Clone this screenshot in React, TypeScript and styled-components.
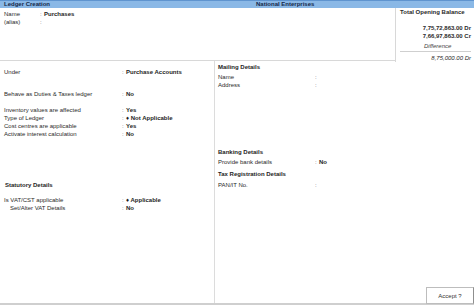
import React from 'react';
import styled, { createGlobalStyle } from 'styled-components';

const GlobalStyle = createGlobalStyle`
  html, body {
    margin: 0;
    padding: 0;
    background: #ffffff;
  }
  body {
    font-family: "Liberation Sans", Arial, sans-serif;
    font-size: 6px;
    color: #2a2a2a;
  }
`;

const Screen = styled.div`
  width: 474px;
  height: 305px;
  display: flex;
  flex-direction: column;
  overflow: hidden;
  background: #ffffff;
`;

const TitleBar = styled.div`
  height: 7px;
  flex: none;
  display: grid;
  grid-template-columns: 1fr 1fr;
  align-items: center;
  background: #8ab8e6;
  border-top: 1px solid #5f94cf;
  color: #14284a;
  font-weight: 700;
  font-size: 6px;
  line-height: 7px;
`;

const TitleLeft = styled.span`
  padding-left: 4px;
`;

const TitleRight = styled.span`
  padding-left: 19px;
`;

const Header = styled.div`
  height: 52px;
  flex: none;
  display: flex;
  border-bottom: 1px solid #d8d8d8;
`;

const NameBlock = styled.div`
  flex: 1;
  padding-top: 2px;
`;

const Row = styled.div<{ $label: number; $indent?: number }>`
  display: grid;
  grid-template-columns: ${(p) => p.$label}px 4px 1fr;
  height: 8px;
  line-height: 8px;
  padding-left: ${(p) => p.$indent ?? 4}px;
  white-space: nowrap;
`;

const Colon = styled.span`
  color: #555;
`;

const Value = styled.span`
  font-weight: 700;
  color: #1e1e1e;
`;

const BalanceBox = styled.div`
  box-sizing: border-box;
  width: 79px;
  flex: none;
  border-left: 1px solid #d8d8d8;
  padding: 0 3px 0 4px;
  display: flex;
  flex-direction: column;
  margin-bottom: -2px;
  background: #fff;
`;

const BalanceTitle = styled.div`
  font-weight: 700;
  line-height: 8px;
  white-space: nowrap;
`;

const Amount = styled.div<{ $italic?: boolean; $gap?: number }>`
  text-align: right;
  line-height: 8px;
  font-weight: ${(p) => (p.$italic ? 400 : 700)};
  font-style: ${(p) => (p.$italic ? 'italic' : 'normal')};
  margin-top: ${(p) => p.$gap ?? 0}px;
  white-space: nowrap;
`;

const DiffLabel = styled.div`
  font-style: italic;
  color: #444;
  line-height: 8px;
  margin-top: 2px;
  padding-left: 24px;
  padding-bottom: 1px;
  border-bottom: 1px solid #cfcfcf;
`;

const Body = styled.div`
  flex: 1;
  display: flex;
  min-height: 0;
`;

const LeftColumn = styled.div`
  width: 214px;
  flex: none;
  border-right: 1px solid #dcdcdc;
  padding-top: 7px;
`;

const RightColumn = styled.div`
  flex: 1;
  display: flex;
  flex-direction: column;
  padding-top: 2px;
`;

const Group = styled.div<{ $gap: number }>`
  margin-top: ${(p) => p.$gap}px;
`;

const SectionTitle = styled.div<{ $indent?: number }>`
  font-weight: 700;
  line-height: 8px;
  height: 8px;
  padding-left: ${(p) => p.$indent ?? 3}px;
  color: #1e1e1e;
`;

const Spacer = styled.div`
  flex: 1;
`;

const AcceptButton = styled.button`
  align-self: flex-end;
  width: 48px;
  height: 17px;
  margin: 0 0 -1px 0;
  border: 1px solid #bdbdbd;
  border-right-color: #8f8f8f;
  background: #ffffff;
  font-family: "Liberation Sans", Arial, sans-serif;
  font-size: 6px;
  color: #333;
  padding: 0;
  position: relative;
  z-index: 1;
`;

const BottomBar = styled.div`
  height: 2px;
  flex: none;
  background: #cfcfcf;
`;

type Field = { label: string; value?: string; indent?: number };

const FieldRow: React.FC<Field & { labelWidth: number }> = ({ label, value, indent, labelWidth }) => (
  <Row $label={labelWidth - (indent ?? 4) + 4} $indent={indent}>
    <span>{label}</span>
    <Colon>:</Colon>
    <Value>{value ?? ''}</Value>
  </Row>
);

export default function App() {
  return (
    <>
      <GlobalStyle />
      <Screen>
        <TitleBar>
          <TitleLeft>Ledger Creation</TitleLeft>
          <TitleRight>National Enterprises</TitleRight>
        </TitleBar>

        <Header>
          <NameBlock>
            <FieldRow labelWidth={36} label="Name" value="Purchases" />
            <FieldRow labelWidth={36} label="(alias)" />
          </NameBlock>
          <BalanceBox>
            <BalanceTitle>Total Opening Balance</BalanceTitle>
            <Amount $gap={8}>7,75,72,863.00 Dr</Amount>
            <Amount>7,66,97,863.00 Cr</Amount>
            <DiffLabel>Difference</DiffLabel>
            <Amount $italic $gap={2}>8,75,000.00 Dr</Amount>
          </BalanceBox>
        </Header>

        <Body>
          <LeftColumn>
            <FieldRow labelWidth={118} label="Under" value="Purchase Accounts" />
            <Group $gap={14}>
              <FieldRow labelWidth={118} label="Behave as Duties & Taxes ledger" value="No" />
            </Group>
            <Group $gap={8}>
              <FieldRow labelWidth={118} label="Inventory values are affected" value="Yes" />
              <FieldRow labelWidth={118} label="Type of Ledger" value="♦ Not Applicable" />
              <FieldRow labelWidth={118} label="Cost centres are applicable" value="Yes" />
              <FieldRow labelWidth={118} label="Activate interest calculation" value="No" />
            </Group>
            <Group $gap={43}>
              <SectionTitle $indent={5}>Statutory Details</SectionTitle>
            </Group>
            <Group $gap={7}>
              <FieldRow labelWidth={118} label="Is VAT/CST applicable" value="♦ Applicable" />
              <FieldRow labelWidth={118} indent={10} label="Set/Alter VAT Details" value="No" />
            </Group>
          </LeftColumn>

          <RightColumn>
            <SectionTitle>Mailing Details</SectionTitle>
            <Group $gap={2}>
              <FieldRow labelWidth={96} indent={3} label="Name" />
              <FieldRow labelWidth={96} indent={3} label="Address" />
            </Group>
            <Group $gap={59}>
              <SectionTitle>Banking Details</SectionTitle>
            </Group>
            <Group $gap={2}>
              <FieldRow labelWidth={96} indent={3} label="Provide bank details" value="No" />
            </Group>
            <Group $gap={4}>
              <SectionTitle>Tax Registration Details</SectionTitle>
            </Group>
            <Group $gap={3}>
              <FieldRow labelWidth={96} indent={3} label="PAN/IT No." />
            </Group>
            <Spacer />
            <AcceptButton>Accept ?</AcceptButton>
          </RightColumn>
        </Body>
        <BottomBar />
      </Screen>
    </>
  );
}
